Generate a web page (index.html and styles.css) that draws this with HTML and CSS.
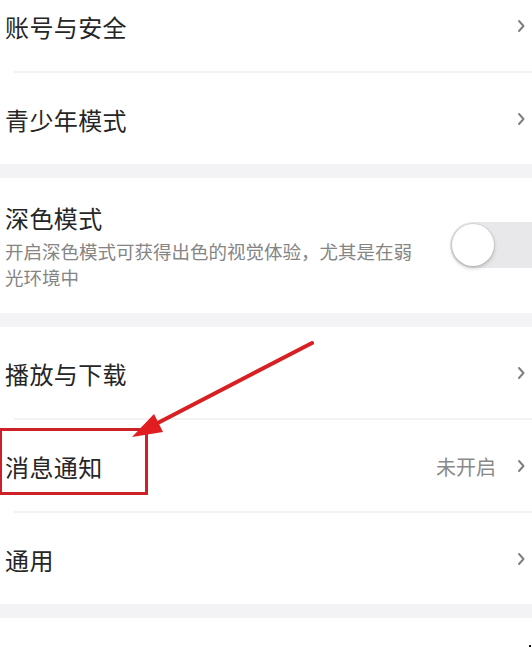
FILE: index.html
```html
<!DOCTYPE html>
<html lang="zh-CN">
<head>
<meta charset="utf-8">
<title>设置</title>
<link rel="stylesheet" href="styles.css">
</head>
<body>
<div class="page">
  <section class="group">
    <div class="row first">
      <span class="label">账号与安全</span>
      <svg class="chev" viewBox="0 0 8 14"><path d="M2 2 L6.5 7 L2 12"/></svg>
    </div>
    <div class="sep"></div>
    <div class="row">
      <span class="label">青少年模式</span>
      <svg class="chev" viewBox="0 0 8 14"><path d="M2 2 L6.5 7 L2 12"/></svg>
    </div>
  </section>
  <div class="band"></div>
  <section class="group">
    <div class="row tall">
      <div class="textblock">
        <div class="label">深色模式</div>
        <div class="desc">开启深色模式可获得出色的视觉体验，尤其是在弱光环境中</div>
      </div>
      <div class="toggle"><div class="knob"></div></div>
    </div>
  </section>
  <div class="band"></div>
  <section class="group">
    <div class="row">
      <span class="label">播放与下载</span>
      <svg class="chev" viewBox="0 0 8 14"><path d="M2 2 L6.5 7 L2 12"/></svg>
    </div>
    <div class="sep"></div>
    <div class="row">
      <span class="label">消息通知</span>
      <span class="value">未开启</span>
      <svg class="chev" viewBox="0 0 8 14"><path d="M2 2 L6.5 7 L2 12"/></svg>
    </div>
    <div class="sep"></div>
    <div class="row">
      <span class="label">通用</span>
      <svg class="chev" viewBox="0 0 8 14"><path d="M2 2 L6.5 7 L2 12"/></svg>
    </div>
  </section>
  <div class="band"></div>
  <section class="group tail"></section>

  <div class="highlight"></div>
  <svg class="arrow" viewBox="0 0 532 648">
    <line x1="312" y1="343" x2="150" y2="427"/>
    <polygon points="132,437 154,414 163,432"/>
  </svg>
  <span class="speck"></span>
</div>
</body>
</html>
```

FILE: styles.css
```css
html, body {
  margin: 0;
  padding: 0;
  background: #ffffff;
}

body {
  width: 532px;
  height: 648px;
  overflow: hidden;
  font-family: "Noto Sans CJK SC", "Noto Sans", sans-serif;
  color: #2a2a2a;
}

.page {
  position: relative;
  width: 532px;
  height: 648px;
  overflow: hidden;
}

.group {
  background: #ffffff;
}

.row {
  height: 91px;
  display: flex;
  align-items: center;
  padding: 0 7px 0 5px;
  box-sizing: border-box;
}

.row.first {
  margin-top: -20px;
}

.label {
  font-size: 24px;
  line-height: 30px;
  letter-spacing: 0.4px;
  color: #262626;
  padding-top: 2px;
}

.row > .label {
  flex: 1;
}

.value {
  font-size: 20px;
  line-height: 30px;
  color: #8a8a8a;
  margin-right: 21px;
  padding-top: 2px;
}

.chev {
  width: 8px;
  height: 14px;
  flex: none;
}

.chev path {
  fill: none;
  stroke: #808080;
  stroke-width: 2;
  stroke-linecap: round;
  stroke-linejoin: round;
}

.sep {
  height: 2px;
  margin-left: 14px;
  background: #f2f2f4;
}

.band {
  height: 14px;
  background: #f3f3f6;
}

.row.tall {
  height: 135px;
  padding-right: 0;
  align-items: flex-start;
  padding-top: 23px;
}

.textblock {
  flex: 1;
}

.textblock .label {
  padding-top: 0;
  line-height: 34px;
}

.desc {
  width: 420px;
  font-size: 18.5px;
  line-height: 26px;
  color: #858585;
  margin-top: 3px;
}

.toggle {
  width: 82px;
  height: 46px;
  margin-top: 21px;
  border-radius: 23px 0 0 23px;
  background: #e8e8ea;
  display: flex;
  align-items: center;
  padding-left: 2px;
  box-sizing: border-box;
  flex: none;
}

.knob {
  width: 42px;
  height: 42px;
  border-radius: 50%;
  background: #ffffff;
  box-shadow: 0 2px 4px rgba(0, 0, 0, 0.22), 0 0 0 1px rgba(0, 0, 0, 0.06);
}

.tail {
  height: 40px;
}

.highlight {
  position: absolute;
  left: -1px;
  top: 428px;
  width: 149px;
  height: 67px;
  border: 3px solid #cc2128;
  box-sizing: border-box;
}

.arrow {
  position: absolute;
  left: 0;
  top: 0;
  width: 532px;
  height: 648px;
  pointer-events: none;
}

.arrow line {
  stroke: #d81f22;
  stroke-width: 4;
  stroke-linecap: round;
}

.arrow polygon {
  fill: #e11d21;
}

.speck {
  position: absolute;
  left: 529px;
  top: 645px;
  width: 2px;
  height: 2px;
  background: #111;
}
```
